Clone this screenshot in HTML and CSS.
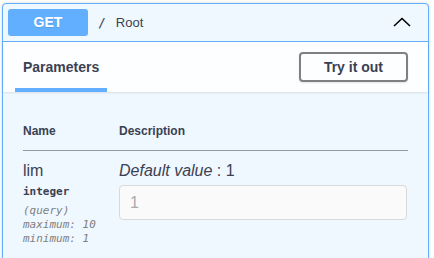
FILE: index.html
```html
<!DOCTYPE html>
<html lang="en">
  <head>
    <meta charset="UTF-8" />
    <meta name="viewport" content="width=device-width, initial-scale=1.0" />
    <title>Root</title>
    <link rel="stylesheet" href="styles.css">
  </head>
  <body>
    <div class="opblock">
      <div class="summary">
        <span class="method">GET</span>
        <span class="path">/</span>
        <span class="summary-desc">Root</span>
        <svg class="arrow" width="18" height="10" viewBox="0 0 18 10">
          <polyline points="1,9 9,1.5 17,9" fill="none" stroke="#000" stroke-width="1.6" />
        </svg>
      </div>

      <div class="section-header">
        <div class="tab-item"><h4><span>Parameters</span></h4></div>
        <button class="try-out">Try it out</button>
      </div>

      <div class="table-container">
        <table class="parameters">
          <thead>
            <tr>
              <th class="col-name">Name</th>
              <th>Description</th>
            </tr>
          </thead>
          <tbody>
            <tr>
              <td class="col-name">
                <div class="param-name">lim</div>
                <div class="param-type">integer</div>
                <div class="param-in">(query)</div>
                <div class="param-in">maximum: 10</div>
                <div class="param-in">minimum: 1</div>
              </td>
              <td class="col-desc">
                <div class="default-value"><i>Default value</i> : 1</div>
                <input type="text" placeholder="1" />
              </td>
            </tr>
          </tbody>
        </table>
      </div>
    </div>
  </body>
</html>
```

FILE: styles.css
```css
body {
  margin: 0;
  padding: 3px 0 0 2px;
  font-family: "Liberation Sans", Arial, sans-serif;
  color: #3b4151;
  background-color: #fff;
  height: 258px;
  box-sizing: border-box;
  overflow: hidden;
}

.opblock {
  width: 425px;
  border: 1px solid #61affe;
  border-radius: 4px;
  background-color: #eff7ff;
  box-shadow: 0 0 3px rgba(0, 0, 0, 0.19);
}

.summary {
  display: flex;
  align-items: center;
  padding: 5px;
  border-bottom: 1px solid #61affe;
}

.method {
  min-width: 80px;
  padding: 6px 0;
  border-radius: 3px;
  background-color: #61affe;
  color: #fff;
  font-size: 14px;
  font-weight: bold;
  line-height: 15px;
  text-align: center;
  text-shadow: 0 1px 0 rgba(0, 0, 0, 0.1);
}

.path {
  padding: 0 10px;
  font-family: "DejaVu Sans Mono", monospace;
  font-size: 13px;
}

.summary-desc {
  flex: 1;
  font-size: 13px;
}

.arrow {
  margin-right: 12px;
  margin-top: -2px;
}

.section-header {
  display: flex;
  align-items: center;
  justify-content: space-between;
  min-height: 50px;
  padding: 0 20px;
  box-sizing: border-box;
  background-color: rgba(255, 255, 255, 0.85);
  box-shadow: 0 1px 2px rgba(0, 0, 0, 0.1);
}

.tab-item h4 {
  margin: 0;
  font-size: 14px;
}

.tab-item span {
  position: relative;
}

.tab-item span:after {
  content: "";
  position: absolute;
  left: -8px;
  bottom: -17px;
  width: calc(100% + 16px);
  height: 4px;
  background-color: #61affe;
}

.try-out {
  padding: 5px 23px;
  border: 2px solid #808080;
  border-radius: 4px;
  background: transparent;
  color: #3b4151;
  font-family: "Liberation Sans", Arial, sans-serif;
  font-size: 14px;
  font-weight: bold;
  box-shadow: 0 1px 2px rgba(0, 0, 0, 0.1);
}

.table-container {
  padding: 20px;
}

.parameters {
  width: 100%;
  border-collapse: collapse;
}

.parameters th {
  padding: 12px 0;
  border-bottom: 1px solid rgba(59, 65, 81, 0.3);
  font-size: 12px;
  text-align: left;
}

.col-name {
  width: 96px;
}

.parameters td {
  padding: 10px 0;
  vertical-align: top;
}

.param-name {
  font-size: 16px;
  line-height: 19px;
}

.param-type {
  padding: 5px 0;
  font-family: "DejaVu Sans Mono", monospace;
  font-size: 11px;
  font-weight: bold;
  line-height: 14px;
  color: #3b4151;
}

.param-in {
  font-family: "DejaVu Sans Mono", monospace;
  font-size: 11px;
  font-style: italic;
  line-height: 14px;
  color: #808080;
}

.param-in:first-of-type {
  margin-top: 2px;
}

.default-value {
  font-size: 16px;
  line-height: 19px;
}

.col-desc input {
  display: block;
  width: 288px;
  height: 35px;
  box-sizing: border-box;
  margin: 5px 0;
  padding: 8px 10px;
  border: 1px solid #d9d9d9;
  border-radius: 4px;
  background-color: #fafafa;
  font-family: "Liberation Sans", Arial, sans-serif;
  font-size: 16px;
  color: #3b4151;
}

.col-desc input::placeholder {
  color: #aaa;
}
```
